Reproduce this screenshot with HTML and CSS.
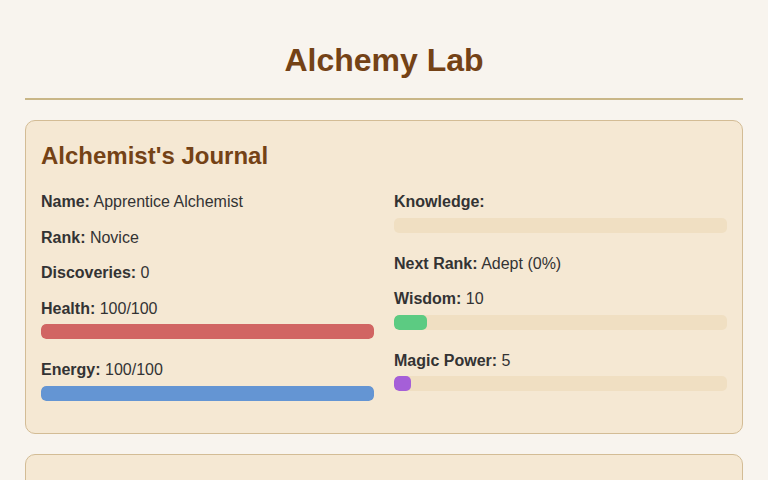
FILE: index.html
```html
<!DOCTYPE html>
<html lang="en">
<head>
<meta charset="utf-8">
<title>Alchemy Lab</title>
<link rel="stylesheet" href="styles.css">
</head>
<body>
<header class="header">
  <h1 class="title">Alchemy Lab</h1>
</header>
<main class="main">
  <section class="card">
    <h2 class="card-title">Alchemist's Journal</h2>
    <div class="columns">
      <div class="col">
        <p class="stat"><b>Name:</b> Apprentice Alchemist</p>
        <p class="stat"><b>Rank:</b> Novice</p>
        <p class="stat"><b>Discoveries:</b> 0</p>
        <div class="meter">
          <p class="meter-label"><b>Health:</b> 100/100</p>
          <div class="track"><div class="fill fill-health" style="width:100%"></div></div>
        </div>
        <div class="meter">
          <p class="meter-label"><b>Energy:</b> 100/100</p>
          <div class="track"><div class="fill fill-energy" style="width:100%"></div></div>
        </div>
      </div>
      <div class="col">
        <div class="meter">
          <p class="meter-label"><b>Knowledge:</b></p>
          <div class="track"><div class="fill fill-knowledge" style="width:0%"></div></div>
        </div>
        <p class="stat"><b>Next Rank:</b> Adept (0%)</p>
        <div class="meter">
          <p class="meter-label"><b>Wisdom:</b> 10</p>
          <div class="track"><div class="fill fill-wisdom" style="width:10%"></div></div>
        </div>
        <div class="meter">
          <p class="meter-label"><b>Magic Power:</b> 5</p>
          <div class="track"><div class="fill fill-magic" style="width:5%"></div></div>
        </div>
      </div>
    </div>
  </section>
  <section class="card">
    <h2 class="card-title">Alchemical Operations</h2>
    <div class="columns">
      <div class="col">
        <p class="stat">Select ingredients to begin an experiment.</p>
      </div>
    </div>
  </section>
</main>
</body>
</html>
```

FILE: styles.css
```css
* { box-sizing: border-box; }

html, body {
  margin: 0;
  background: #f8f4ee;
}

body {
  padding: 20px 25px;
  font-family: "Liberation Sans", Arial, sans-serif;
  font-size: 16px;
  color: #333333;
}

.header {
  padding: 15px 0 12px;
  border-bottom: 2px solid #c9b687;
  text-align: center;
}

.title {
  margin: 0;
  font-size: 32px;
  line-height: 51px;
  font-weight: bold;
  color: #744216;
}

.main {
  display: flex;
  flex-direction: column;
  gap: 20px;
  margin-top: 20px;
}

.card {
  background: #f5e8d3;
  border: 1px solid #d3bc95;
  border-radius: 10px;
  padding: 15px 15px 14px;
}

.card-title {
  margin: 0 0 14px;
  font-size: 24px;
  line-height: 39px;
  font-weight: bold;
  color: #744216;
}

.columns {
  display: grid;
  grid-template-columns: 1fr 1fr;
  gap: 20px;
}

.col {
  display: flex;
  flex-direction: column;
}

.stat {
  margin: 0 0 10px;
  line-height: 25.6px;
}

.meter {
  margin-bottom: 18px;
}

.meter-label {
  margin: 0;
  line-height: 25.6px;
}

.track {
  margin-top: 3px;
  height: 15px;
  border-radius: 5px;
  background: #f0dfc2;
  overflow: hidden;
}

.fill {
  height: 100%;
  border-radius: 5px;
}

.fill-health { background: #d16563; }
.fill-energy { background: #6495d3; }
.fill-knowledge { background: #e0b050; }
.fill-wisdom { background: #5ccb82; }
.fill-magic { background: #a55fd8; }
```
